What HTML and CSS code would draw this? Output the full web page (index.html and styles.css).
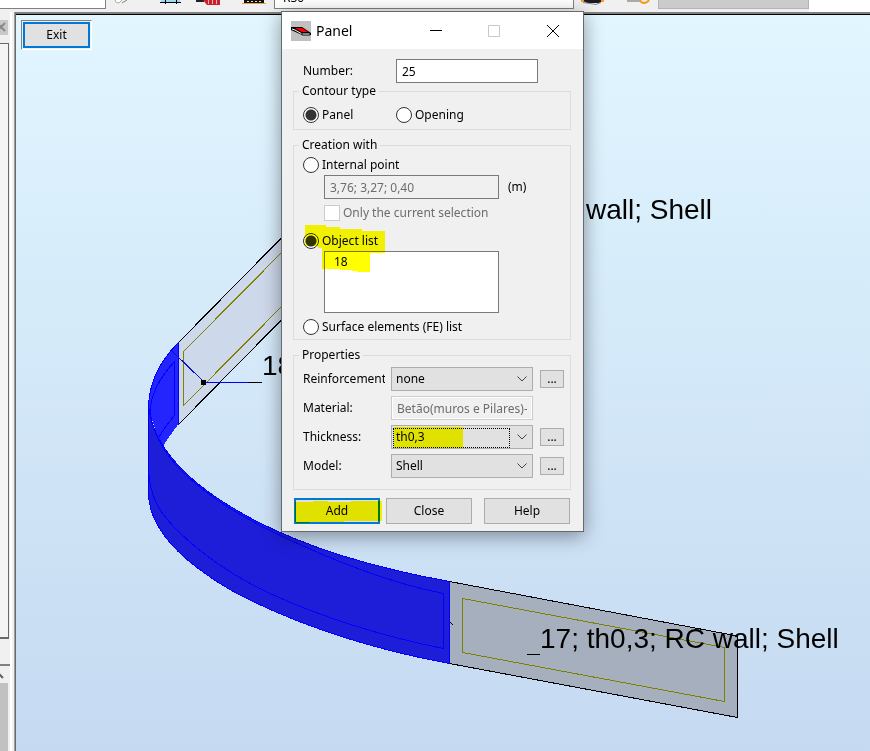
FILE: index.html
```html
<!DOCTYPE html>
<html lang="en">
<head>
    <meta charset="UTF-8">
    <meta name="viewport" content="width=device-width, initial-scale=1.0">
    <title>Panel</title>
    <link rel="stylesheet" href="styles.css">
</head>
<body>

    <div class="toolbar">
        <input class="toolbar-input" type="text" aria-label="Selection">
        <div class="toolbar-icons">
            <svg width="168" height="12" viewBox="106 0 168 12">
                <path d="M115 0q0 3 4 3l3-3" fill="#fff" stroke="#aaa"/>
                <path d="M122 3l5-3" stroke="#8a8468"/>
                <path d="M161 0h19v2h-19z" fill="#9fdcf0"/>
                <path d="M160 2.500h21M165.500 0v4M176.500 0v4" stroke="#000" fill="none"/>
                <path d="M196 0h8v2h-8z" fill="#222"/>
                <path d="M203 0h17v5h-13z" fill="#c8232c"/>
                <path d="M208.500 0v4M212.500 0v4M216.500 0v4" stroke="#f0b0b0"/>
                <path d="M244 0h20v3h-20z" fill="#111"/>
                <path d="M242 3.500h24" stroke="#e9a23c"/>
                <path d="M247 1.500h15" stroke="#ddd" stroke-dasharray="2 2"/>
            </svg>
        </div>
        <div class="toolbar-case">R30</div>
        <div class="toolbar-icons">
            <svg width="84" height="12" viewBox="574 0 84 12">
                <path d="M581 0h23l-5 3h-12z" fill="#1c1a22"/>
                <path d="M581 1h3M601 1h3" stroke="#f09a28" stroke-width="2"/>
                <path d="M583 2.500l7 1 6 1 5-2" stroke="#888" fill="none"/>
                <path d="M627 0h14v2h-14z" fill="#aaa"/>
                <path d="M640 0q1 3 4 3t5-3" fill="none" stroke="#f59a18" stroke-width="2"/>
            </svg>
        </div>
        <div class="toolbar-status"></div>
        <div class="toolbar-end"></div>
    </div>

    <div class="workspace">
        <div class="sidebar">
            <div class="sidebar-close">
                <svg width="8" height="15" viewBox="0 0 8 15"><path d="M-3 3l8 8M5 3l-8 8" stroke="#8a8a8a" stroke-width="2"/></svg>
            </div>
            <div class="sidebar-tree"></div>
            <div class="sidebar-scroll">
                <svg width="8" height="17" viewBox="0 0 8 17"><path d="M-3 12l3-3 3 3" stroke="#606060" stroke-width="2" fill="none"/></svg>
                <div class="sidebar-thumb"></div>
            </div>
        </div>

        <div class="viewport">
            <svg class="model" width="854" height="736" viewBox="16 15 854 736">
                <!-- straight wall behind the dialog -->
                <path d="M179 342L300 219V301L179 424z" fill="#cdd8ea"/>
                <path d="M179 342L300 219M179 424L300 301" class="edge"/>
                <path d="M300 234L183.500 351.500V405.500L300 288" class="inner"/>

                <!-- curved wall -->
                <path d="M178.500 342.500C160 361 148 383 148.500 410L162 448C166 441 171 434 178.500 424z" fill="#2424ff"/>
                <path d="M174.500 361.500C160 377 151 394 150 412M174.500 361.500V415.500C168 423 162 431 157 441" class="curve"/>
                <path d="M178.500 342.500V424.500M178.500 342.500C160 361 148 383 148.500 410" class="curve"/>
                <path d="M148.500 402C149 421 157 439 171 457C191 482 219 501 254 520C310 549 380 569 449.500 581.500V663.500C380 651 310 629 254 602C219 586 187 562 171 544C157 528 148.500 511 148.500 493z" fill="#1e1ed8" stroke="#00f"/>
                <path d="M150 412C153 432 162 450 177 466C198 489 231 511 269 530C320 555 380 581 443.500 593.500V648.500C380 636 316 615 269 593C232 576 199 552 177 530C159 512 150 497 148.500 470" class="curve"/>

                <!-- wall 17 -->
                <path d="M449.500 581.500L737.500 636V717.500L449.500 663.500z" fill="#a6afbe"/>
                <path d="M449.500 581.500L737.500 636V717.500L449.500 663.500M450 622l3 3" class="edge"/>
                <path d="M462.500 598.500L724.500 647.500V701.500L462.500 652.500z" class="inner"/>
                <path d="M449.500 581.500V663.500" class="curve"/>

                <!-- label leaders -->
                <path d="M172 351L204 382" class="leader"/>
                <path d="M204 382.500H248" stroke="#00f"/>
                <path d="M248 382.500H262M527 654.500H540" class="edge"/>
                <path d="M201 380h5v5h-5z"/>
                <text x="262" y="375" class="label">18</text>
                <text x="586" y="219" class="label">wall; Shell</text>
                <text x="540" y="648" class="label">17; th0,3; RC wall; Shell</text>
            </svg>
            <div class="exit-frame">
                <button class="button default exit">Exit</button>
            </div>
        </div>
    </div>

    <form class="dialog">
        <div class="titlebar">
            <svg class="titlebar-icon" width="20" height="20" viewBox="0 0 20 20">
                <path d="M0 0h20v20H0z" fill="#c0c0c0"/>
                <path d="M0 6h11l9 6v2h-9L0 9z" fill="#000"/>
                <path d="M4 7h7l6 4h-6z" fill="#f00"/>
                <path d="M1 8l3 1 7 4" stroke="#fff" fill="none"/>
                <path d="M11 12h8v2h-8z" fill="#fff" stroke="#000"/>
            </svg>
            <span class="titlebar-text">Panel</span>
            <button type="button" class="window-button" aria-label="Minimize">
                <svg width="12" height="12" viewBox="0 0 12 12"><path d="M0 5.500h12" stroke="#000"/></svg>
            </button>
            <button type="button" class="window-button" aria-label="Maximize" disabled>
                <svg width="12" height="12" viewBox="0 0 12 12"><path d="M.5.5h11v11H.5z" stroke="#c8c8c8" fill="none"/></svg>
            </button>
            <button type="button" class="window-button" aria-label="Close">
                <svg width="12" height="12" viewBox="0 0 12 12"><path d="M0 0l12 12M12 0L0 12" stroke="#000"/></svg>
            </button>
        </div>

        <div class="dialog-body">
            <div class="number-row">
                <label for="number">Number:</label>
                <input class="field" type="text" id="number" value="25">
            </div>

            <fieldset class="group contour">
                <legend>Contour type</legend>
                <label class="option"><input type="radio" name="contour" checked>Panel</label>
                <label class="option"><input type="radio" name="contour">Opening</label>
            </fieldset>

            <fieldset class="group creation">
                <legend>Creation with</legend>
                <label class="option"><input type="radio" name="creation">Internal point</label>
                <div class="point-row">
                    <input class="field" type="text" value="3,76; 3,27; 0,40" aria-label="Internal point" disabled>
                    <span>(m)</span>
                </div>
                <label class="option only-current"><input type="checkbox" disabled>Only the current selection</label>
                <label class="option object-list"><input type="radio" name="creation" checked>Object list</label>
                <textarea class="objects" aria-label="Objects">18</textarea>
                <label class="option"><input type="radio" name="creation">Surface elements (FE) list</label>
            </fieldset>

            <fieldset class="group properties">
                <legend>Properties</legend>
                <div class="property">
                    <label for="reinforcement">Reinforcement</label>
                    <select id="reinforcement"><option>none</option></select>
                    <button type="button" class="button more">...</button>
                </div>
                <div class="property">
                    <label for="material">Material:</label>
                    <input class="field material" type="text" id="material" value="Betão(muros e Pilares)-" disabled>
                </div>
                <div class="property focused">
                    <label for="thickness">Thickness:</label>
                    <select id="thickness"><option>th0,3</option></select>
                    <button type="button" class="button more">...</button>
                </div>
                <div class="property">
                    <label for="model">Model:</label>
                    <select id="model"><option>Shell</option></select>
                    <button type="button" class="button more">...</button>
                </div>
            </fieldset>

            <div class="actions">
                <button type="button" class="button default">Add</button>
                <button type="button" class="button">Close</button>
                <button type="button" class="button help">Help</button>
            </div>
        </div>

        <!-- yellow marker strokes -->
        <svg class="marker" width="303" height="521" viewBox="281 11 303 521">
            <path d="M305 225h21v2h14v2h22v2h23v22h-15v19h-13v-1h-5v-1h-12v-1h-18v-21h-4v-2h-13z"/>
            <path d="M394 427h69v21h-69z"/>
            <path d="M295 502h18v-1h15v1h23v-1h31v20h-38v1h-35v1h-13v-1h-1z"/>
        </svg>
    </form>

</body>
</html>
```

FILE: styles.css
```css
* {
    margin: 0;
    padding: 0;
    box-sizing: border-box;
}
body {
    font-family: "Noto Sans", "Open Sans", sans-serif;
    font-size: 12px;
    line-height: 16px;
    color: #000;
    background-color: #f0f0f0;
    display: flex;
    flex-direction: column;
    height: 100vh;
    overflow: hidden;
}
input,
select,
textarea,
button {
    font: inherit;
    color: inherit;
    border-radius: 0;
}
svg {
    display: block;
}

/* toolbar */
.toolbar {
    display: flex;
    height: 12px;
    flex-shrink: 0;
}
.toolbar-input {
    width: 106px;
    height: 9px;
    background-color: #fff;
    border: 1px solid #808080;
    border-width: 0 1px 1px 0;
}
.toolbar-case {
    display: flex;
    align-items: flex-end;
    width: 300px;
    height: 9px;
    padding: 0 8px 2px;
    overflow: hidden;
    background-color: #fff;
    border: 1px solid #808080;
    border-top: none;
}
.toolbar-status {
    width: 151px;
    height: 9px;
    background-color: #cbcbcb;
    border: 1px solid #b4b4b4;
    border-top: none;
}
.toolbar-end {
    flex: 1;
    background-color: #fff;
}

.workspace {
    display: flex;
    flex: 1;
    min-height: 0;
}

/* sidebar */
.sidebar {
    display: flex;
    flex-direction: column;
    width: 15px;
    border-right: 1px solid #a0a0a0;
    background: linear-gradient(90deg, #f0f0f0 10px, #fff 10px, #fff 12px, #f0f0f0 12px);
}
.sidebar-close {
    width: 8px;
    height: 15px;
    margin: 8px 0;
    background-color: #c8c8c8;
}
.sidebar-tree {
    width: 9px;
    height: 596px;
    border: 1px solid #696969;
    border-width: 1px 1px 2px 0;
    background-color: #f4f4f4;
}
.sidebar-scroll {
    flex: 1;
    display: flex;
    flex-direction: column;
    width: 10px;
    margin-top: 25px;
    border-top: 2px solid #808080;
}
.sidebar-thumb {
    flex: 1;
    width: 8px;
    background-color: #c1c1c1;
}

/* 3D view */
.viewport {
    position: relative;
    flex: 1;
    overflow: hidden;
    border-top: 2px solid #808080;
    border-left: 1px solid #696969;
    background: linear-gradient(#e1f6ff, #c5d9f1);
    box-shadow: inset 0 1px #000;
}
.model {
    position: absolute;
    top: 1px;
    left: 0;
    shape-rendering: crispEdges;
}
.edge {
    fill: none;
    stroke: #000;
}
.inner {
    fill: none;
    stroke: #808000;
}
.curve {
    fill: none;
    stroke: #0000ff;
}
.leader {
    stroke: #1010c0;
}
.label {
    font-family: "Liberation Sans", Arial, sans-serif;
    font-size: 28px;
}
.exit-frame {
    position: absolute;
    top: 6px;
    left: 5px;
    padding: 1px;
    border: 1px solid #808080;
    border-right-color: #fff;
    border-bottom-color: #fff;
    background-color: #f0f0f0;
}

.button {
    width: 86px;
    height: 26px;
    background-color: #e1e1e1;
    border: 1px solid #adadad;
}
.button.default {
    border: 2px solid #0078d7;
}
.button.exit {
    display: block;
    width: 67px;
}

/* dialog */
.dialog {
    position: absolute;
    top: 11px;
    left: 281px;
    width: 303px;
    border: 1px solid #646b70;
    background-color: #f0f0f0;
    box-shadow: 0 4px 18px rgba(0, 0, 0, 0.4);
}
.titlebar {
    display: flex;
    align-items: center;
    height: 37px;
    padding-left: 9px;
    background-color: #fff;
}
.titlebar-text {
    flex: 1;
    margin-left: 5px;
    font-size: 14px;
}
.window-button {
    display: flex;
    justify-content: center;
    align-items: center;
    width: 58px;
    height: 36px;
    border: none;
    background: none;
}
.window-button:last-child {
    width: 60px;
}
.dialog-body {
    padding: 10px 12px 7px 11px;
}
.field {
    height: 24px;
    padding: 0 5px;
    background-color: #fff;
    border: 1px solid #7a7a7a;
}
.field:disabled {
    color: #6d6d6d;
    background-color: #f0f0f0;
}
.number-row {
    display: flex;
    align-items: center;
    padding-left: 10px;
}
.number-row label {
    width: 93px;
}
.number-row .field {
    width: 142px;
}

.group {
    border: 1px solid #dcdcdc;
    margin-bottom: 7px;
}
.group legend {
    margin-left: -4px;
    padding: 0 3px;
}
.option {
    display: flex;
    align-items: center;
    gap: 3px;
    height: 16px;
}
.option input {
    appearance: none;
    width: 16px;
    height: 16px;
    background-color: #fff;
    border: 1px solid #333;
}
.option input[type="radio"] {
    border-radius: 50%;
}
.option input[type="radio"]:checked {
    background: radial-gradient(circle, #333 5px, #fff 6px);
}
.option input:disabled {
    border-color: #ccc;
}
.contour {
    display: grid;
    grid-template-columns: 93px 1fr;
    padding: 8px 9px 6px;
}
.creation {
    padding: 4px 9px;
}
.point-row {
    display: flex;
    align-items: center;
    gap: 9px;
    margin: 2px 0 6px 21px;
}
.point-row .field {
    width: 175px;
}
.only-current {
    margin-left: 21px;
    color: #6d6d6d;
}
.object-list {
    margin-top: 12px;
}
.objects {
    display: block;
    width: 175px;
    height: 62px;
    margin: 2px 0 6px 21px;
    padding: 2px 9px;
    border: 1px solid #7a7a7a;
    background-color: #fff;
    resize: none;
}

.properties {
    display: flex;
    flex-direction: column;
    gap: 5px;
    padding: 4px 6px 11px 9px;
    margin-bottom: 8px;
}
.property {
    display: flex;
    align-items: center;
}
.property label {
    width: 82px;
    margin-right: 6px;
    overflow: hidden;
    white-space: nowrap;
}
.property select {
    appearance: none;
    width: 142px;
    height: 24px;
    padding: 0 24px 0 4px;
    border: 1px solid #adadad;
    background: #e1e1e1 url("data:image/svg+xml,%3Csvg xmlns='http://www.w3.org/2000/svg' width='10' height='6'%3E%3Cpath d='M.5.5L5 5 9.500.5' fill='none' stroke='%23444'/%3E%3C/svg%3E") no-repeat right 5px center;
}
.property.focused {
    position: relative;
}
.property.focused::after {
    content: "";
    position: absolute;
    top: 3px;
    left: 90px;
    width: 115px;
    height: 18px;
    border: 1px dotted #000;
}
.field.material {
    width: 142px;
    border-color: #ccc;
    box-shadow: inset 0 0 0 1px #fff;
}
.button.more {
    width: 24px;
    height: 18px;
    margin-left: 7px;
    line-height: 12px;
}
.actions {
    display: flex;
    gap: 6px;
    padding: 0 1px;
}
.actions .help {
    margin-left: auto;
}
.marker {
    position: absolute;
    top: -1px;
    left: -1px;
    fill: #ffff00;
    mix-blend-mode: multiply;
    pointer-events: none;
}
```
